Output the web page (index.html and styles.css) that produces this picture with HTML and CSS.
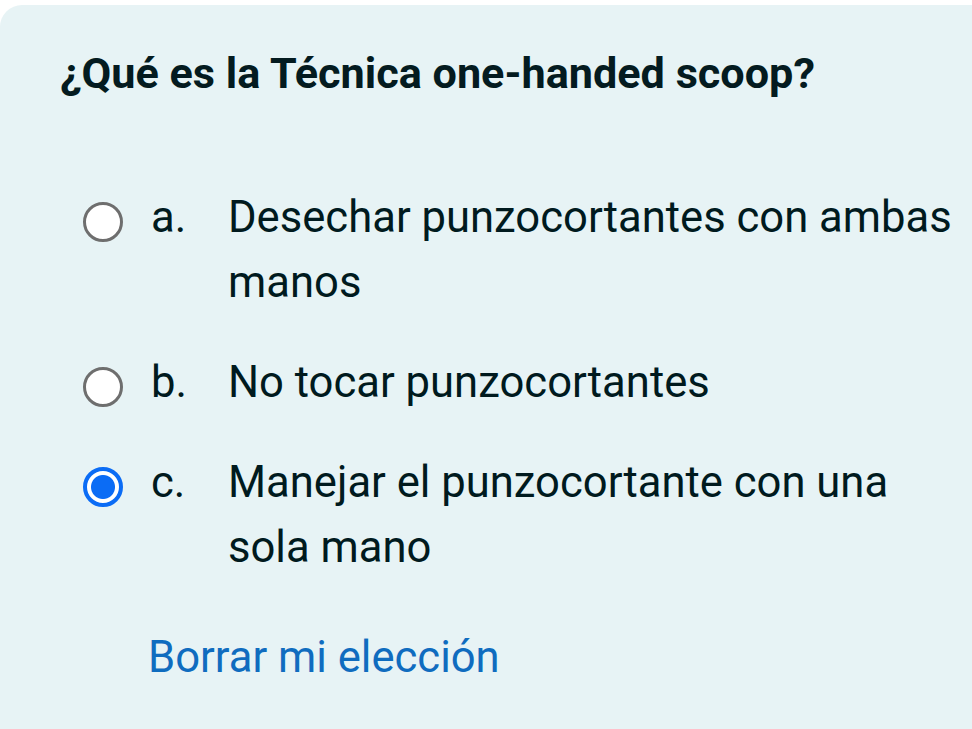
FILE: index.html
```html
<!DOCTYPE html>
<html lang="es">
<head>
<meta charset="utf-8">
<link rel="stylesheet" href="styles.css">
</head>
<body>
<div class="panel">
  <div class="qtext">¿Qué es la Técnica one-handed scoop?</div>
  <div class="answers">
    <div class="opt">
      <span class="radio"></span>
      <span class="num">a.</span>
      <span class="label">Desechar punzocortantes con ambas manos</span>
    </div>
    <div class="opt">
      <span class="radio"></span>
      <span class="num">b.</span>
      <span class="label">No tocar punzocortantes</span>
    </div>
    <div class="opt">
      <span class="radio checked"></span>
      <span class="num">c.</span>
      <span class="label">Manejar el punzocortante con una sola mano</span>
    </div>
  </div>
  <a class="clear" href="#">Borrar mi elección</a>
</div>
</body>
</html>
```
FILE: styles.css
```css
html, body {
  margin: 0;
  padding: 0;
  background: #ffffff;
  overflow: hidden;
}
body {
  font-family: Roboto, "Liberation Sans", sans-serif;
  color: #001a1e;
}
.panel {
  box-sizing: border-box;
  height: 724px;
  overflow: hidden;
  margin-top: 5px;
  background: #e7f3f5;
  border-top-left-radius: 22px;
  padding: 44px 10px 0 60px;
}
.qtext {
  font-size: 43.2px;
  font-weight: 700;
  line-height: 50px;
  color: #041b20;
}
.answers {
  margin-top: 86px;
}
.opt {
  display: flex;
  align-items: flex-start;
  font-size: 43.6px;
  line-height: 65px;
  padding-bottom: 35px;
}
.radio {
  flex: none;
  box-sizing: border-box;
  width: 40px;
  height: 40px;
  margin: 17px 28px 0 23px;
  border-radius: 50%;
  border: 3px solid #6e6e6e;
  background: #ffffff;
}
.radio.checked {
  border: 4px solid #0b6cf5;
  background: radial-gradient(circle, #0b6cf5 0 11.5px, #ffffff 12.5px);
}
.num {
  flex: none;
  width: 77px;
}
.label {
  flex: 1;
}
.clear {
  display: block;
  margin: 10px 0 0 88px;
  font-size: 43.6px;
  line-height: 65px;
  color: #0f6cbf;
  text-decoration: none;
}
```
